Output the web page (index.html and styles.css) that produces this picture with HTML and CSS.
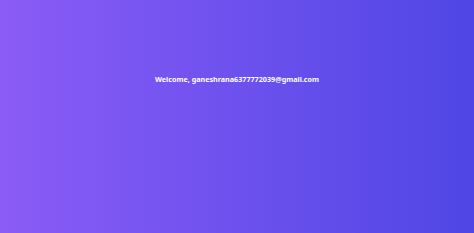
FILE: index.html
```html
<!DOCTYPE html>
<html>
<head>
<meta charset="utf-8">
<link rel="stylesheet" href="styles.css">
</head>
<body>
<main class="page">
  <h1 class="welcome">Welcome, ganeshrana6377772039@gmail.com</h1>
</main>
</body>
</html>
```
FILE: styles.css
```css
html, body {
  margin: 0;
  padding: 0;
  height: 100%;
}
.page {
  box-sizing: border-box;
  height: 233px;
  background: linear-gradient(to right, #8b5cf6, #4f46e5);
  display: flex;
  justify-content: center;
  padding-top: 73px;
}
.welcome {
  margin: 0;
  color: #ffffff;
  font-family: "Noto Sans", sans-serif;
  font-weight: 700;
  font-size: 7.2px;
  line-height: 12px;
  height: 12px;
}
```
